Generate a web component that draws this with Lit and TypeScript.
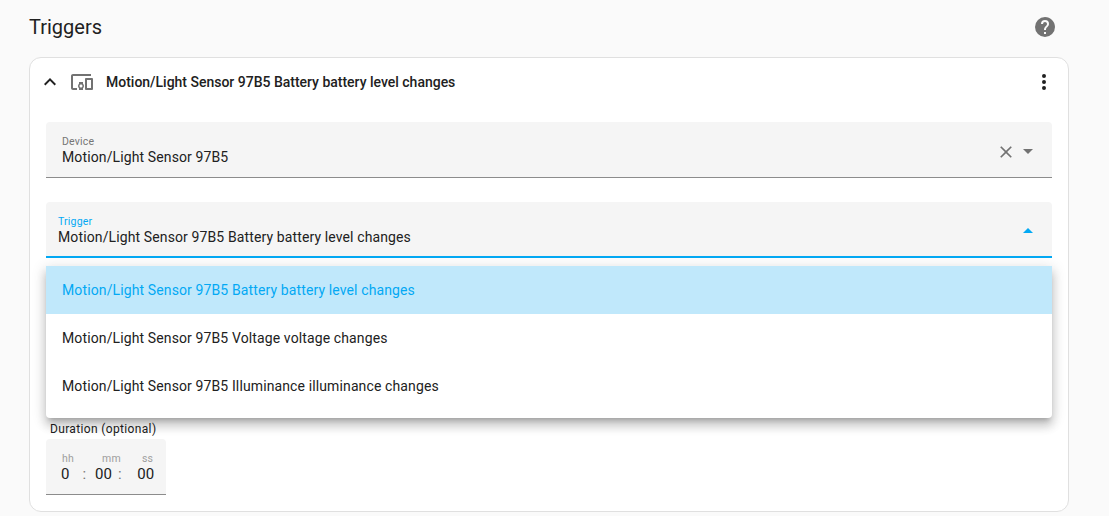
import { LitElement, html, css, svg } from "lit";
import { customElement } from "lit/decorators.js";

const icon = (d: string, cls = "") =>
  html`<svg class="icon ${cls}" viewBox="0 0 24 24">${svg`<path d=${d}></path>`}</svg>`;

const HELP = "M15.07,11.25L14.17,12.17C13.45,12.89 13,13.5 13,15H11V14.5C11,13.39 11.45,12.39 12.17,11.67L13.41,10.41C13.78,10.05 14,9.55 14,9C14,7.89 13.1,7 12,7A2,2 0 0,0 10,9H8A4,4 0 0,1 12,5A4,4 0 0,1 16,9C16,9.88 15.64,10.67 15.07,11.25M13,19H11V17H13M12,2A10,10 0 0,0 2,12A10,10 0 0,0 12,22A10,10 0 0,0 22,12C22,6.47 17.5,2 12,2Z";
const CHEVRON = "M7.41,15.41L12,10.83L16.59,15.41L18,14L12,8L6,14L7.41,15.41Z";
const DEVICES = "M3 6H21V4H3C1.9 4 1 4.9 1 6V18C1 19.1 1.9 20 3 20H7V18H3V6M13 12H9V13.78C8.39 14.33 8 15.11 8 16C8 16.89 8.39 17.67 9 18.22V20H13V18.22C13.61 17.67 14 16.88 14 16S13.61 14.33 13 13.78V12M11 17.5C10.17 17.5 9.5 16.83 9.5 16S10.17 14.5 11 14.5 12.5 15.17 12.5 16 11.83 17.5 11 17.5M22 8H16C15.5 8 15 8.5 15 9V19C15 19.5 15.5 20 16 20H22C22.5 20 23 19.5 23 19V9C23 8.5 22.5 8 22 8M21 18H17V10H21V18Z";
const DOTS = "M12,16A2,2 0 0,1 14,18A2,2 0 0,1 12,20A2,2 0 0,1 10,18A2,2 0 0,1 12,16M12,10A2,2 0 0,1 14,12A2,2 0 0,1 12,14A2,2 0 0,1 10,12A2,2 0 0,1 12,10M12,4A2,2 0 0,1 14,6A2,2 0 0,1 12,8A2,2 0 0,1 10,6A2,2 0 0,1 12,4Z";
const CLOSE = "M19,6.41L17.59,5L12,10.59L6.41,5L5,6.41L10.59,12L5,17.59L6.41,19L12,13.41L17.59,19L19,17.59L13.41,12L19,6.41Z";
const DOWN = "M7,10L12,15L17,10H7Z";
const UP = "M7,15L12,10L17,15H7Z";

@customElement("app-root")
export class AppRoot extends LitElement {
  static styles = css`
    :host {
      display: block;
      height: 516px;
      overflow: hidden;
      background: #fafafa;
      font-family: Roboto, sans-serif;
      color: #212121;
    }
    .page { padding: 0 40px 0 29px; }
    .head {
      height: 57px;
      display: flex;
      align-items: center;
      justify-content: space-between;
      padding-right: 1px;
      box-sizing: border-box;
      padding-bottom: 3px;
    }
    h1 {
      margin: 0;
      font-size: 20px;
      font-weight: 400;
      line-height: 32px;
    }
    .icon { display: block; fill: currentColor; flex: none; width: 24px; height: 24px; }
    .help { color: #727272; margin-right: 11px; }
    .card {
      position: relative;
      background: #fff;
      border: 1px solid #e0e0e0;
      border-radius: 12px;
      height: 455px;
      box-sizing: border-box;
    }
    .card-head {
      height: 48px;
      display: flex;
      align-items: center;
      padding-left: 8px;
    }
    .chev { color: #212121; margin-right: 8px; }
    .dev { color: #727272; margin-right: 12px; }
    .title {
      flex: 1;
      font-size: 14px;
      font-weight: 500;
      letter-spacing: -0.01px;
    }
    .dots { margin-right: 12px; color: #212121; }
    .body { padding: 16px 16px 0; }
    .field {
      height: 56px;
      box-sizing: border-box;
      background: #f5f5f5;
      border-radius: 4px 4px 0 0;
      border-bottom: 1px solid #8c8c8c;
      display: flex;
      align-items: center;
      padding-left: 16px;
      margin-bottom: 24px;
    }
    .field.open {
      border-bottom: 2px solid #03a9f4;
      padding-left: 12px;
    }
    .text { flex: 1; align-self: flex-start; padding-top: 13px; }
    .label {
      font-size: 10.5px;
      line-height: 13px;
      color: #757575;
      letter-spacing: 0.2px;
    }
    .open .label { color: #03a9f4; }
    .value {
      font-size: 14px;
      line-height: 18px;
      letter-spacing: 0.12px;
      color: #212121;
    }
    .x { color: #727272; width: 20px; height: 20px; margin-top: 4px; }
    .caret { color: #727272; margin-right: 12px; margin-top: 2px; }
    .open .caret { color: #03a9f4; }
    .menu {
      position: absolute;
      left: 16px;
      right: 16px;
      top: 208px;
      padding-bottom: 8px;
      background: #fff;
      border-radius: 0 0 4px 4px;
      box-shadow: 0 5px 5px -3px rgba(0,0,0,.2), 0 8px 10px 1px rgba(0,0,0,.14), 0 3px 14px 2px rgba(0,0,0,.12);
      z-index: 2;
    }
    .item {
      height: 48px;
      display: flex;
      align-items: center;
      padding-left: 16px;
      font-size: 14px;
      letter-spacing: 0.12px;
    }
    .item.sel { background: #c0e8fb; color: #03a9f4; }
    .duration { position: absolute; left: 16px; top: 363px; }
    .dlabel {
      font-size: 12px;
      line-height: 16px;
      letter-spacing: 0.35px;
      padding-left: 4px;
      margin-bottom: 2px;
    }
    .time {
      width: 120px;
      height: 56px;
      box-sizing: border-box;
      background: #f5f5f5;
      border-bottom: 1px solid #8c8c8c;
      border-radius: 4px 4px 0 0;
      padding: 13px 0 0 16px;
    }
    .units {
      display: grid;
      grid-template-columns: 40px 40px 40px;
      font-size: 10.5px;
      line-height: 14px;
      color: #9e9e9e;
      letter-spacing: 0.2px;
    }
    .vals {
      display: grid;
      grid-template-columns: 21.5px 12.5px 23px 19.3px auto;
      margin-left: -1px;
      font-size: 15px;
      line-height: 17px;
    }
    .colon { color: #757575; }
  `;

  render() {
    return html`
      <div class="page">
        <div class="head">
          <h1>Triggers</h1>
          ${icon(HELP, "help")}
        </div>
        <div class="card">
          <div class="card-head">
            ${icon(CHEVRON, "chev")}
            ${icon(DEVICES, "dev")}
            <div class="title">Motion/Light Sensor 97B5 Battery battery level changes</div>
            ${icon(DOTS, "dots")}
          </div>
          <div class="body">
            <div class="field">
              <div class="text">
                <div class="label">Device</div>
                <div class="value">Motion/Light Sensor 97B5</div>
              </div>
              ${icon(CLOSE, "x")}
              ${icon(DOWN, "caret")}
            </div>
            <div class="field open">
              <div class="text">
                <div class="label">Trigger</div>
                <div class="value">Motion/Light Sensor 97B5 Battery battery level changes</div>
              </div>
              ${icon(UP, "caret")}
            </div>
          </div>
          <div class="menu">
            <div class="item sel">Motion/Light Sensor 97B5 Battery battery level changes</div>
            <div class="item">Motion/Light Sensor 97B5 Voltage voltage changes</div>
            <div class="item">Motion/Light Sensor 97B5 Illuminance illuminance changes</div>
          </div>
          <div class="duration">
            <div class="dlabel">Duration (optional)</div>
            <div class="time">
              <div class="units"><span>hh</span><span>mm</span><span>ss</span></div>
              <div class="vals">
                <span>0</span><span class="colon">:</span><span>00</span><span class="colon">:</span><span>00</span>
              </div>
            </div>
          </div>
        </div>
      </div>
    `;
  }
}
